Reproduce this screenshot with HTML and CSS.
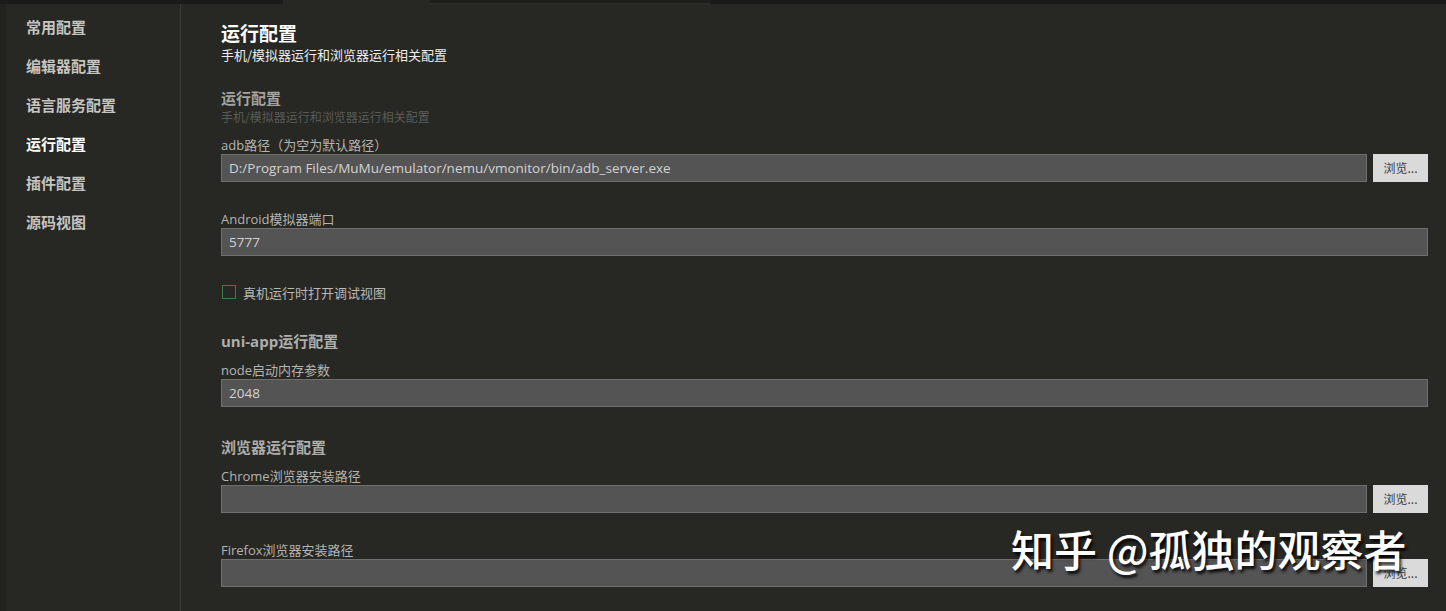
FILE: index.html
```html
<!DOCTYPE html>
<html lang="zh-CN">
<head>
<meta charset="utf-8">
<title>运行配置</title>
<link rel="stylesheet" href="styles.css">
</head>
<body>
<div class="topbar">
  <div class="tab dark" style="width:283px"></div>
  <div class="tab active" style="width:147px"></div>
  <div class="tab dark framed" style="width:280px"></div>
  <div class="tab dark rest"></div>
</div>
<div class="main">
  <nav class="sidebar">
    <div class="nav-item">常用配置</div>
    <div class="nav-item">编辑器配置</div>
    <div class="nav-item">语言服务配置</div>
    <div class="nav-item current">运行配置</div>
    <div class="nav-item">插件配置</div>
    <div class="nav-item">源码视图</div>
  </nav>
  <section class="content">
    <h1 class="page-title">运行配置</h1>
    <p class="page-sub">手机/模拟器运行和浏览器运行相关配置</p>

    <h2 class="sec-title first">运行配置</h2>
    <p class="sec-sub">手机/模拟器运行和浏览器运行相关配置</p>

    <div class="field after-sub">
      <div class="label">adb路径（为空为默认路径）</div>
      <div class="row">
        <div class="input">D:/Program Files/MuMu/emulator/nemu/vmonitor/bin/adb_server.exe</div>
        <div class="btn">浏览...</div>
      </div>
    </div>

    <div class="field">
      <div class="label">Android模拟器端口</div>
      <div class="row">
        <div class="input">5777</div>
      </div>
    </div>

    <div class="check-row">
      <span class="checkbox"></span>
      <span class="check-label">真机运行时打开调试视图</span>
    </div>

    <h2 class="sec-title">uni-app运行配置</h2>
    <div class="field after-title">
      <div class="label">node启动内存参数</div>
      <div class="row">
        <div class="input">2048</div>
      </div>
    </div>

    <h2 class="sec-title">浏览器运行配置</h2>
    <div class="field after-title">
      <div class="label">Chrome浏览器安装路径</div>
      <div class="row">
        <div class="input"></div>
        <div class="btn">浏览...</div>
      </div>
    </div>

    <div class="field">
      <div class="label">Firefox浏览器安装路径</div>
      <div class="row">
        <div class="input"></div>
        <div class="btn">浏览...</div>
      </div>
    </div>
  </section>
</div>
<div class="watermark">知乎 @孤独的观察者</div>
</body>
</html>
```

FILE: styles.css
```css
* { box-sizing: border-box; }
html, body {
  margin: 0;
  padding: 0;
  height: 100%;
  overflow: hidden;
}
body {
  background: #272723;
  color: #c8c8c8;
  font-family: "Open Sans", "Noto Sans CJK SC", sans-serif;
  position: relative;
}
.topbar {
  display: flex;
  height: 4px;
}
.tab.dark { background: #1b1b19; }
.tab.active { background: #272723; }
.tab.framed { background: #1e1e1b; border-bottom: 1px solid #2c2c28; }
.tab.rest { flex: 1; }

.main {
  display: flex;
  height: calc(100% - 4px);
}
.sidebar {
  width: 181px;
  flex: none;
  padding-top: 3px;
  border-left: 6px solid #22221f;
  border-right: 1px solid #3b3b37;
}
.nav-item {
  height: 39px;
  line-height: 39px;
  padding-left: 20px;
  font-family: "Noto Sans CJK SC", sans-serif;
  font-size: 15px;
  font-weight: 700;
  color: #c4c4c0;
}
.nav-item.current { color: #ffffff; }

.content {
  flex: 1;
  padding: 17px 18px 0 40px;
}
.page-title {
  margin: 0;
  font-family: "Noto Sans CJK SC", sans-serif;
  font-size: 19px;
  line-height: 24px;
  font-weight: 700;
  color: #ffffff;
}
.page-sub {
  margin: 0;
  font-family: "Noto Sans CJK SC", sans-serif;
  font-size: 13px;
  line-height: 20px;
  color: #ececec;
}
.sec-title {
  margin: 30px 0 0;
  font-family: "Open Sans", "Noto Sans CJK SC", sans-serif;
  font-size: 15px;
  line-height: 20px;
  font-weight: 700;
  color: #aeaeab;
}
.sec-title.first { margin-top: 23px; color: #a3a3a0; }
.sec-sub {
  margin: 0;
  font-family: "Noto Sans CJK SC", sans-serif;
  font-size: 12px;
  line-height: 18px;
  color: #5b5b58;
}
.field { margin-top: 28px; }
.field.after-sub { margin-top: 10px; }
.field.after-title { margin-top: 10px; }
.label {
  font-size: 13px;
  line-height: 18px;
  color: #b4b4b1;
}
.row {
  display: flex;
  gap: 6px;
}
.input {
  flex: 1;
  height: 28px;
  line-height: 26px;
  padding: 0 7px;
  background: #545454;
  border: 1px solid #6f6f6f;
  font-size: 13.5px;
  color: #d2d2d2;
  white-space: nowrap;
}
.btn {
  width: 55px;
  height: 28px;
  line-height: 28px;
  text-align: center;
  background: #dadada;
  color: #3a3a3a;
  font-family: "Noto Sans CJK SC", sans-serif;
  font-size: 12px;
}
.check-row {
  margin-top: 27px;
  display: flex;
  align-items: center;
  height: 18px;
}
.checkbox {
  width: 14px;
  height: 14px;
  margin-left: 1px;
  border: 1px solid #3f7b50;
  flex: none;
}
.check-label {
  margin-left: 7px;
  font-family: "Noto Sans CJK SC", sans-serif;
  font-size: 13px;
  color: #b8b8b5;
}
.watermark {
  position: absolute;
  left: 1011px;
  top: 519px;
  font-family: "Noto Sans CJK SC", sans-serif;
  font-size: 43px;
  line-height: 58px;
  font-weight: 500;
  color: #ffffff;
  text-shadow: 2px 3px 3px rgba(0,0,0,0.85);
  white-space: nowrap;
}
```
